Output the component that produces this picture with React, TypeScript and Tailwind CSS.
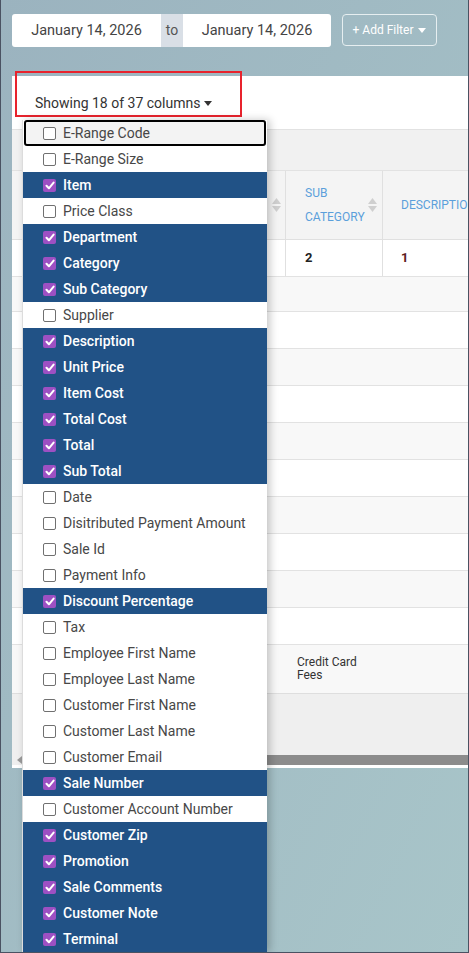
const columns: { label: string; on: boolean }[] = [
  { label: "E-Range Code", on: false },
  { label: "E-Range Size", on: false },
  { label: "Item", on: true },
  { label: "Price Class", on: false },
  { label: "Department", on: true },
  { label: "Category", on: true },
  { label: "Sub Category", on: true },
  { label: "Supplier", on: false },
  { label: "Description", on: true },
  { label: "Unit Price", on: true },
  { label: "Item Cost", on: true },
  { label: "Total Cost", on: true },
  { label: "Total", on: true },
  { label: "Sub Total", on: true },
  { label: "Date", on: false },
  { label: "Disitributed Payment Amount", on: false },
  { label: "Sale Id", on: false },
  { label: "Payment Info", on: false },
  { label: "Discount Percentage", on: true },
  { label: "Tax", on: false },
  { label: "Employee First Name", on: false },
  { label: "Employee Last Name", on: false },
  { label: "Customer First Name", on: false },
  { label: "Customer Last Name", on: false },
  { label: "Customer Email", on: false },
  { label: "Sale Number", on: true },
  { label: "Customer Account Number", on: false },
  { label: "Customer Zip", on: true },
  { label: "Promotion", on: true },
  { label: "Sale Comments", on: true },
  { label: "Customer Note", on: true },
  { label: "Terminal", on: true },
];

function Caret({ className }: { className?: string }) {
  return (
    <svg width="8" height="5" viewBox="0 0 8 5" className={className}>
      <path d="M0 0h8L4 5z" fill="currentColor" />
    </svg>
  );
}

function SortArrows() {
  return (
    <svg width="9" height="14" viewBox="0 0 9 14">
      <path d="M4.5 0L9 6H0z" fill="#cfcfcf" />
      <path d="M4.5 14L9 8H0z" fill="#cfcfcf" />
    </svg>
  );
}

function Checkbox({ on }: { on: boolean }) {
  if (on) {
    return (
      <span className="w-[13px] h-[13px] rounded-[2px] bg-[#9d50c3] flex items-center justify-center">
        <svg width="10" height="9" viewBox="0 0 10 9">
          <path d="M1.5 4.8l2.4 2.5L8.6 1.6" stroke="white" strokeWidth="2" fill="none" strokeLinecap="round" strokeLinejoin="round" />
        </svg>
      </span>
    );
  }
  return <span className="w-[13px] h-[13px] rounded-[2px] border border-[#707070] bg-white" />;
}

// alternating rows under the first data row: [height, shaded]
const rows: [number, boolean][] = [
  [35, true],
  [37, false],
  [37, true],
  [37, false],
  [37, true],
  [37, false],
  [37, true],
  [37, false],
  [37, true],
  [37, false],
];

export default function App() {
  return (
    <div className="relative w-[469px] h-[953px] overflow-hidden border-x border-b border-[#4a5262] bg-gradient-to-br from-[#9bb3bf] to-[#a8c5c9] font-['Roboto',sans-serif]">
      {/* filter bar */}
      <div className="flex items-start pt-[14px] pl-[11px]">
        <div className="flex h-[33px] w-[319px] bg-white rounded-[3px] overflow-hidden text-[14.5px] text-[#444]">
          <div className="w-[149px] flex items-center justify-center">January 14, 2026</div>
          <div className="w-[22px] bg-[#d9dfe6] flex items-center justify-center text-[14px] text-[#555]">to</div>
          <div className="flex-1 flex items-center justify-center">January 14, 2026</div>
        </div>
        <button className="ml-[11px] h-[32px] w-[95px] rounded-[4px] border border-[#e6eef0] text-white text-[12px] flex items-center justify-center gap-[5px]">
          + Add Filter
          <Caret />
        </button>
      </div>

      {/* report panel */}
      <div className="mt-[29px] ml-[11px] bg-white h-[692px] flex flex-col">
        <div className="h-[54px] border-b border-[#e2e2e2] flex items-center pl-[23px] pt-[1px] text-[14px] text-[#333] gap-[4px]">
          Showing 18 of 37 columns
          <Caret className="text-[#333]" />
        </div>
        <div className="h-[41px] bg-[#f1f1f1] border-b border-[#e2e2e2]" />
        <div className="h-[69px] bg-[#f4f4f4] border-b border-[#e0e0e0] flex text-[12px] text-[#5b9fdb] leading-[24px]">
          <div className="w-[274px] border-r border-[#e0e0e0] flex items-center justify-end pr-[4px]">
            <SortArrows />
          </div>
          <div className="w-[97px] border-r border-[#e0e0e0] flex items-center pl-[19px] pr-[5px] justify-between">
            <span>
              SUB
              <br />
              CATEGORY
            </span>
            <SortArrows />
          </div>
          <div className="flex-1 flex items-center pl-[18px] whitespace-nowrap overflow-hidden">DESCRIPTION</div>
        </div>
        <div className="h-[37px] flex text-[13px] font-bold border-b border-[#e2e2e2]">
          <div className="w-[274px] border-r border-[#e0e0e0]" />
          <div className="w-[97px] border-r border-[#e0e0e0] flex items-center pl-[19px] text-[#222]">2</div>
          <div className="flex-1 flex items-center pl-[18px] text-[#5c1c1c]">1</div>
        </div>
        {rows.map(([h, shaded], i) => (
          <div
            key={i}
            className={`border-b border-[#e2e2e2] ${shaded ? "bg-[#f8f8f8]" : "bg-white"}`}
            style={{ height: h }}
          />
        ))}
        <div className="h-[49px] bg-[#f8f8f8] border-b border-[#dedede] flex items-center pl-[285px] text-[12px] leading-[13px] text-[#333]">
          Credit Card
          <br />
          Fees
        </div>
        <div className="h-[61px] bg-[#efefef]" />
        <div className="h-[10px] flex">
          <div className="w-[10px] bg-[#efefef] flex items-center justify-end">
            <svg width="5" height="8" viewBox="0 0 5 8">
              <path d="M5 0v8L0 4z" fill="#9a9a9a" />
            </svg>
          </div>
          <div className="flex-1 bg-[#8c8c8c]" />
        </div>
        <div className="h-[3px] bg-white" />
      </div>

      {/* highlight box */}
      <div className="absolute left-[14px] top-[71px] w-[227px] h-[46px] border-2 border-[#e8232d]" />

      {/* column chooser dropdown */}
      <div className="absolute left-[21px] top-[120px] w-[245px] bg-white border-l border-[#dcdcdc] shadow-[3px_0_8px_rgba(0,0,0,0.22)]">
        {columns.map((c, i) => (
          <div
            key={c.label}
            className={`h-[26px] flex items-center gap-[7px] text-[14px] whitespace-nowrap ${
              c.on ? "bg-[#215286] text-white font-medium" : "text-[#474747]"
            } ${i === 0 ? "bg-[#f3f3f3] border-2 border-black rounded-[3px] pl-[17px] mx-[1px]" : "pl-[20px]"}`}
          >
            <Checkbox on={c.on} />
            <span>{c.label}</span>
          </div>
        ))}
      </div>
    </div>
  );
}
